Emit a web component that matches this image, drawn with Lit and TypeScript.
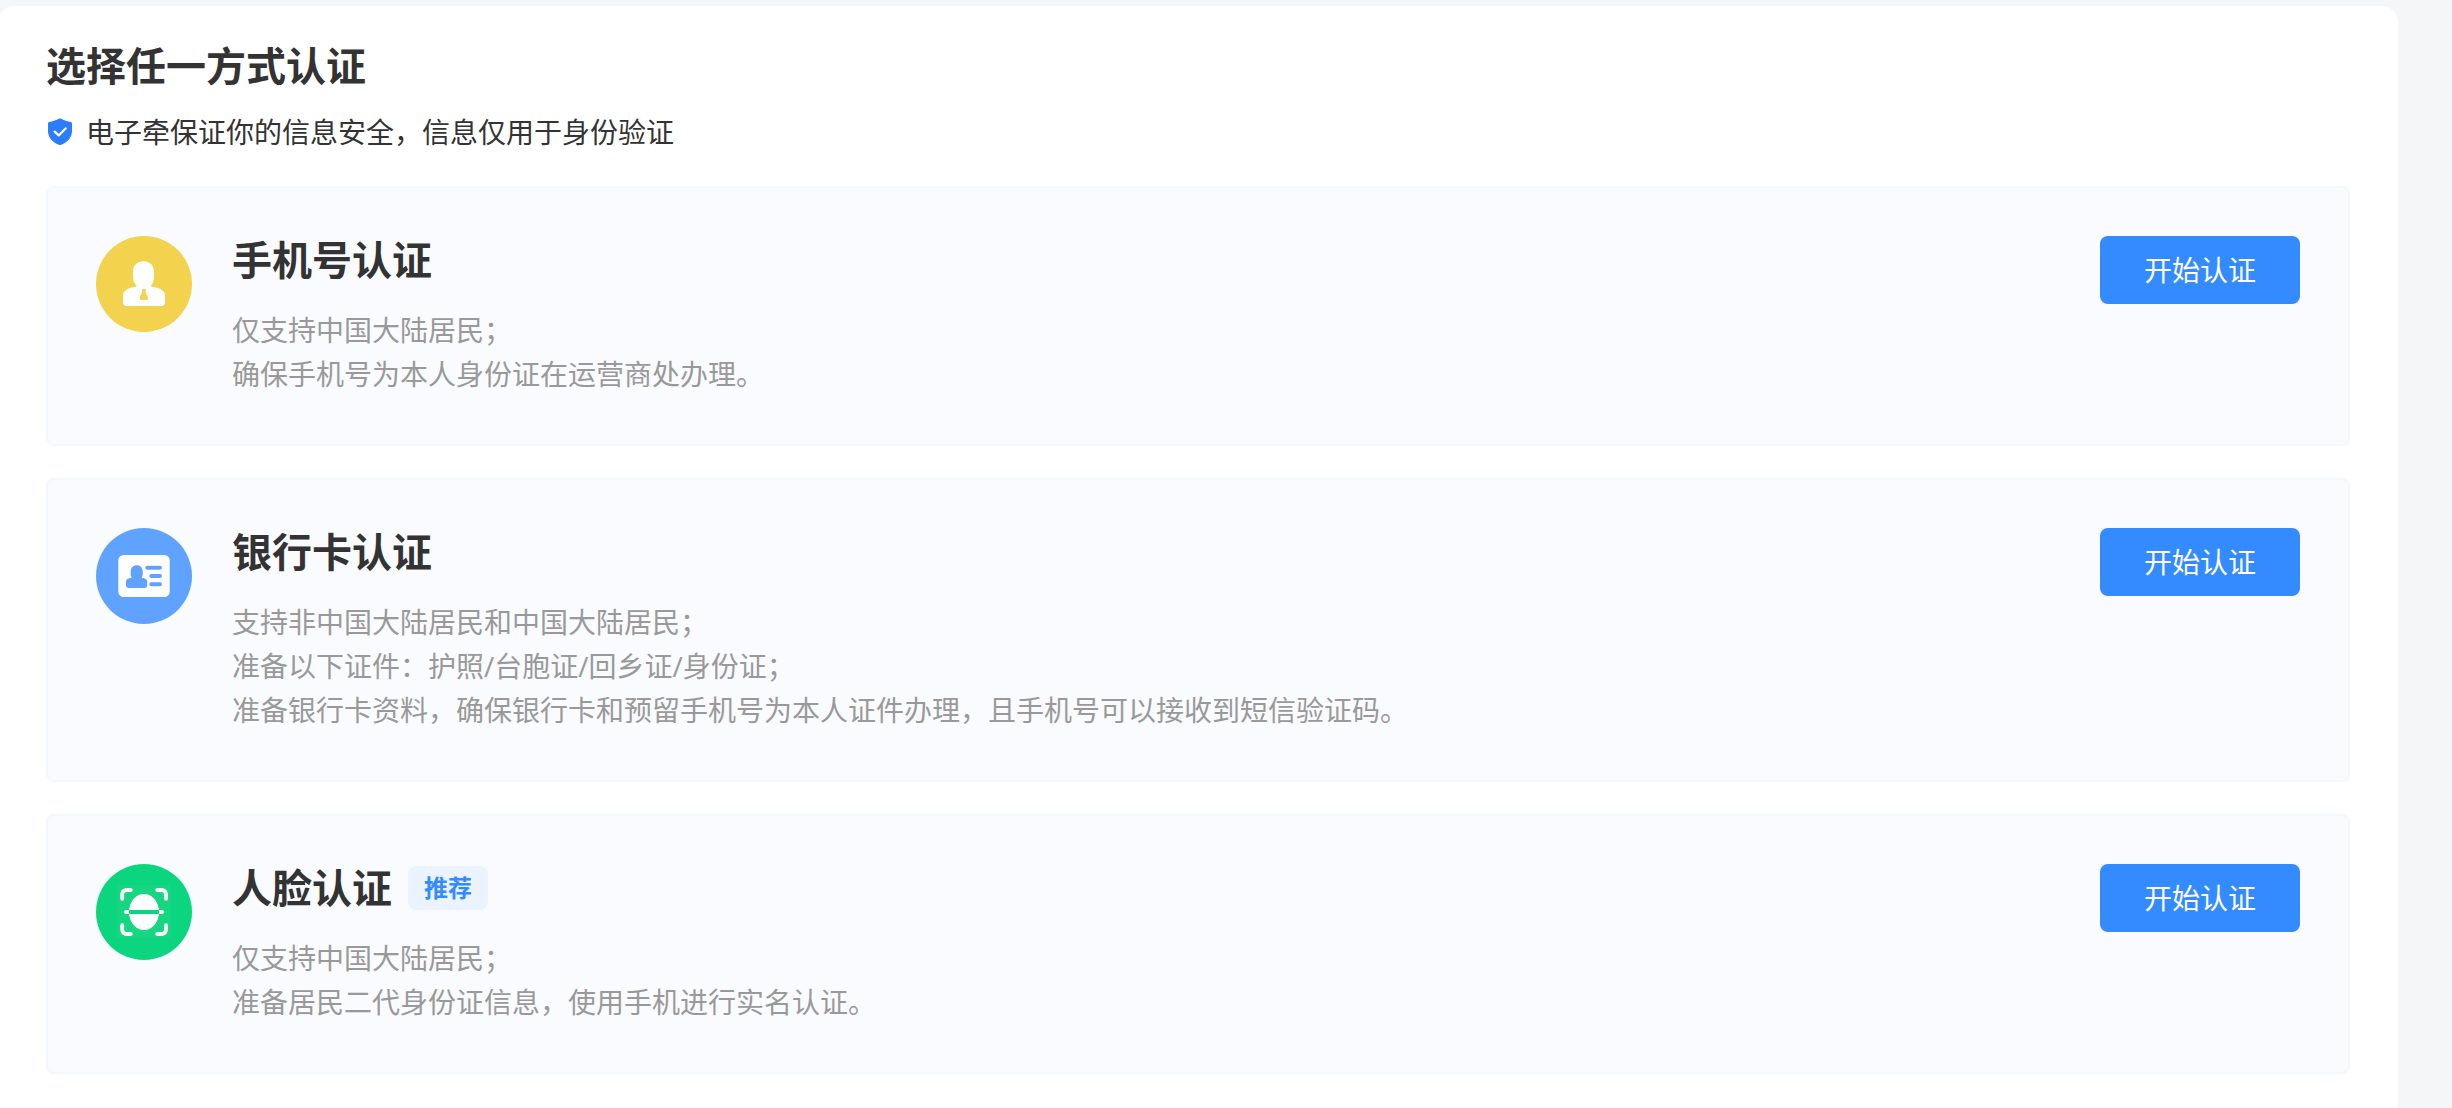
import { LitElement, html, css, svg, nothing } from "lit";
import { customElement, property } from "lit/decorators.js";

type IconName = "phone" | "bank" | "face";

interface Method {
  icon: IconName;
  title: string;
  badge?: string;
  lines: string[];
}

const METHODS: Method[] = [
  {
    icon: "phone",
    title: "手机号认证",
    lines: ["仅支持中国大陆居民；", "确保手机号为本人身份证在运营商处办理。"],
  },
  {
    icon: "bank",
    title: "银行卡认证",
    lines: [
      "支持非中国大陆居民和中国大陆居民；",
      "准备以下证件：护照/台胞证/回乡证/身份证；",
      "准备银行卡资料，确保银行卡和预留手机号为本人证件办理，且手机号可以接收到短信验证码。",
    ],
  },
  {
    icon: "face",
    title: "人脸认证",
    badge: "推荐",
    lines: ["仅支持中国大陆居民；", "准备居民二代身份证信息，使用手机进行实名认证。"],
  },
];

const ICONS = {
  phone: svg`
    <circle cx="48" cy="48" r="48" fill="#f3d24e"/>
    <path fill="#fff" d="M47.500 25.300C53.500 25.300 58 29.500 58 35.500V41C58 45 56.800 47.800 55 49.300V50.600C60 51.200 64.500 52.800 67 55C68.500 56.300 69 57.600 69 59.500V66.500C69 68.600 67.700 70 65.500 70H30.500C28.300 70 27 68.600 27 66.500V59.500C27 57.600 27.500 56.300 29 55C31.500 52.800 35.500 51.200 40.500 50.600V49.300C38.500 47.800 37 45 37 41V35.500C37 29.500 41.500 25.300 47.500 25.300Z"/>
    <path fill="#f3d24e" d="M46.600 53H49.200Q50 53 49.900 54L49.500 57.200C51 58.500 52 60.200 52 62C52 63.400 51.300 64 50 64H45.700C44.400 64 43.700 63.400 43.700 62C43.700 60.200 44.700 58.500 46.300 57.200L45.900 54Q45.800 53 46.600 53Z"/>`,
  bank: svg`
    <circle cx="48" cy="48" r="48" fill="#5fa2ff"/>
    <rect x="22.300" y="27" width="51.400" height="42" rx="5.500" fill="#fff"/>
    <path fill="#5fa2ff" d="M40.700 37.300C44.200 37.300 46.700 39.800 46.700 43.200V46C46.700 47.600 46.300 48.800 45.600 49.800C49.300 50.300 51.200 51.200 51.200 53.500V57C51.200 58.900 50.100 60 48.200 60H33C31.100 60 30 58.900 30 57V53.500C30 51.200 32 50.300 35.800 49.800C35.100 48.800 34.700 47.600 34.700 46V43.200C34.700 39.800 37.200 37.300 40.700 37.300Z"/>
    <path stroke="#5fa2ff" stroke-width="4" stroke-linecap="round" d="M51.300 39.700H64M55.300 48H64M55.300 56.300H64"/>`,
  face: svg`
    <circle cx="48" cy="48" r="48" fill="#0cd580"/>
    <rect x="21.300" y="21" width="53" height="53" fill="#16d682"/>
    <path fill="none" stroke="#fff" stroke-width="3.800" stroke-linecap="round" d="M26.200 34.800V31Q26.200 26 31.200 26H34.800M61.200 26H65Q70 26 70 31V34.800M70 61.200V65Q70 70 65 70H61.200M34.800 70H31.200Q26.200 70 26.200 65V61.200"/>
    <rect x="28" y="46" width="40" height="4" rx="2" fill="#fff"/>
    <ellipse cx="48" cy="48" rx="15" ry="18" fill="#fff"/>
    <rect x="33" y="46" width="30" height="4" fill="#0cd580"/>`,
};

@customElement("auth-method")
export class AuthMethod extends LitElement {
  @property({ attribute: false }) method!: Method;

  static styles = css`
    :host {
      display: block;
    }
    .card {
      display: flex;
      align-items: flex-start;
      gap: 40px;
      padding: 48px;
      border: 2px solid #f3f8ff;
      border-radius: 8px;
      background: #fafbff;
    }
    .icon {
      flex: none;
      display: block;
      width: 96px;
      height: 96px;
    }
    .body {
      flex: 1;
      min-width: 0;
    }
    .head {
      display: flex;
      align-items: center;
      gap: 16px;
      height: 48px;
      margin-bottom: 24px;
    }
    .title {
      margin: 0;
      font-size: 40px;
      line-height: 48px;
      font-weight: 600;
      color: #333;
    }
    .badge {
      padding: 0 16px;
      border-radius: 8px;
      background: #eaf3ff;
      color: #348bff;
      font-size: 24px;
      line-height: 44px;
      font-weight: 600;
    }
    .line {
      margin: 0;
      font-size: 28px;
      line-height: 44px;
      color: #999;
    }
    .start {
      flex: none;
      width: 200px;
      height: 68px;
      padding: 0;
      border: 0;
      border-radius: 8px;
      background: #348bff;
      color: #fff;
      font-family: inherit;
      font-size: 28px;
      line-height: 44px;
      cursor: pointer;
    }
    .start:hover {
      background: #2b7ff0;
    }
  `;

  render() {
    const m = this.method;
    return html`
      <section class="card">
        <svg class="icon" viewBox="0 0 96 96" aria-hidden="true">${ICONS[m.icon]}</svg>
        <div class="body">
          <div class="head">
            <h2 class="title">${m.title}</h2>
            ${m.badge ? html`<span class="badge">${m.badge}</span>` : nothing}
          </div>
          ${m.lines.map((line) => html`<p class="line">${line}</p>`)}
        </div>
        <button class="start" type="button">开始认证</button>
      </section>
    `;
  }
}

@customElement("app-root")
export class AppRoot extends LitElement {
  static styles = css`
    :host {
      display: block;
      box-sizing: border-box;
      min-height: 100vh;
      padding: 6px 54px 0 0;
      overflow: hidden;
      background: #f5f6f8;
      font-family: "Open Sans", "Noto Sans CJK SC", sans-serif;
      color: #333;
    }
    .panel {
      box-sizing: border-box;
      min-height: calc(100vh - 6px);
      margin-left: -2px;
      padding: 32px 48px 34px;
      border-radius: 16px 16px 0 0;
      background: #fff;
    }
    .heading {
      margin: 0 0 16px;
      font-size: 40px;
      line-height: 56px;
      font-weight: 600;
    }
    .notice {
      display: flex;
      align-items: center;
      gap: 12px;
      margin: 0 0 32px;
      font-size: 28px;
      line-height: 44px;
    }
    .shield {
      flex: none;
      width: 28px;
      height: 28px;
    }
    .methods {
      display: flex;
      flex-direction: column;
      gap: 32px;
    }
  `;

  render() {
    return html`
      <main class="panel">
        <h1 class="heading">选择任一方式认证</h1>
        <p class="notice">
          <svg class="shield" viewBox="0 0 28 28" aria-hidden="true">
            <path fill="#2b7cff" d="M14 0.500Q14.600 0.500 15.200 0.800C18.500 2.500 21.500 3.500 24.800 4Q26 4.200 26 5.400V13C26 19.500 21.500 24.500 15.200 26.700Q14 27.100 12.800 26.700C6.500 24.500 2 19.500 2 13V5.400Q2 4.200 3.200 4C6.500 3.500 9.500 2.500 12.800 0.800Q13.400 0.500 14 0.500Z"/>
            <path fill="none" stroke="#fff" stroke-width="2.200" stroke-linecap="round" stroke-linejoin="round" d="M8.600 13.600L12.800 17.400L19.600 10.400"/>
          </svg>
          <span>电子牵保证你的信息安全，信息仅用于身份验证</span>
        </p>
        <div class="methods">
          ${METHODS.map((m) => html`<auth-method .method=${m}></auth-method>`)}
        </div>
      </main>
    `;
  }
}
